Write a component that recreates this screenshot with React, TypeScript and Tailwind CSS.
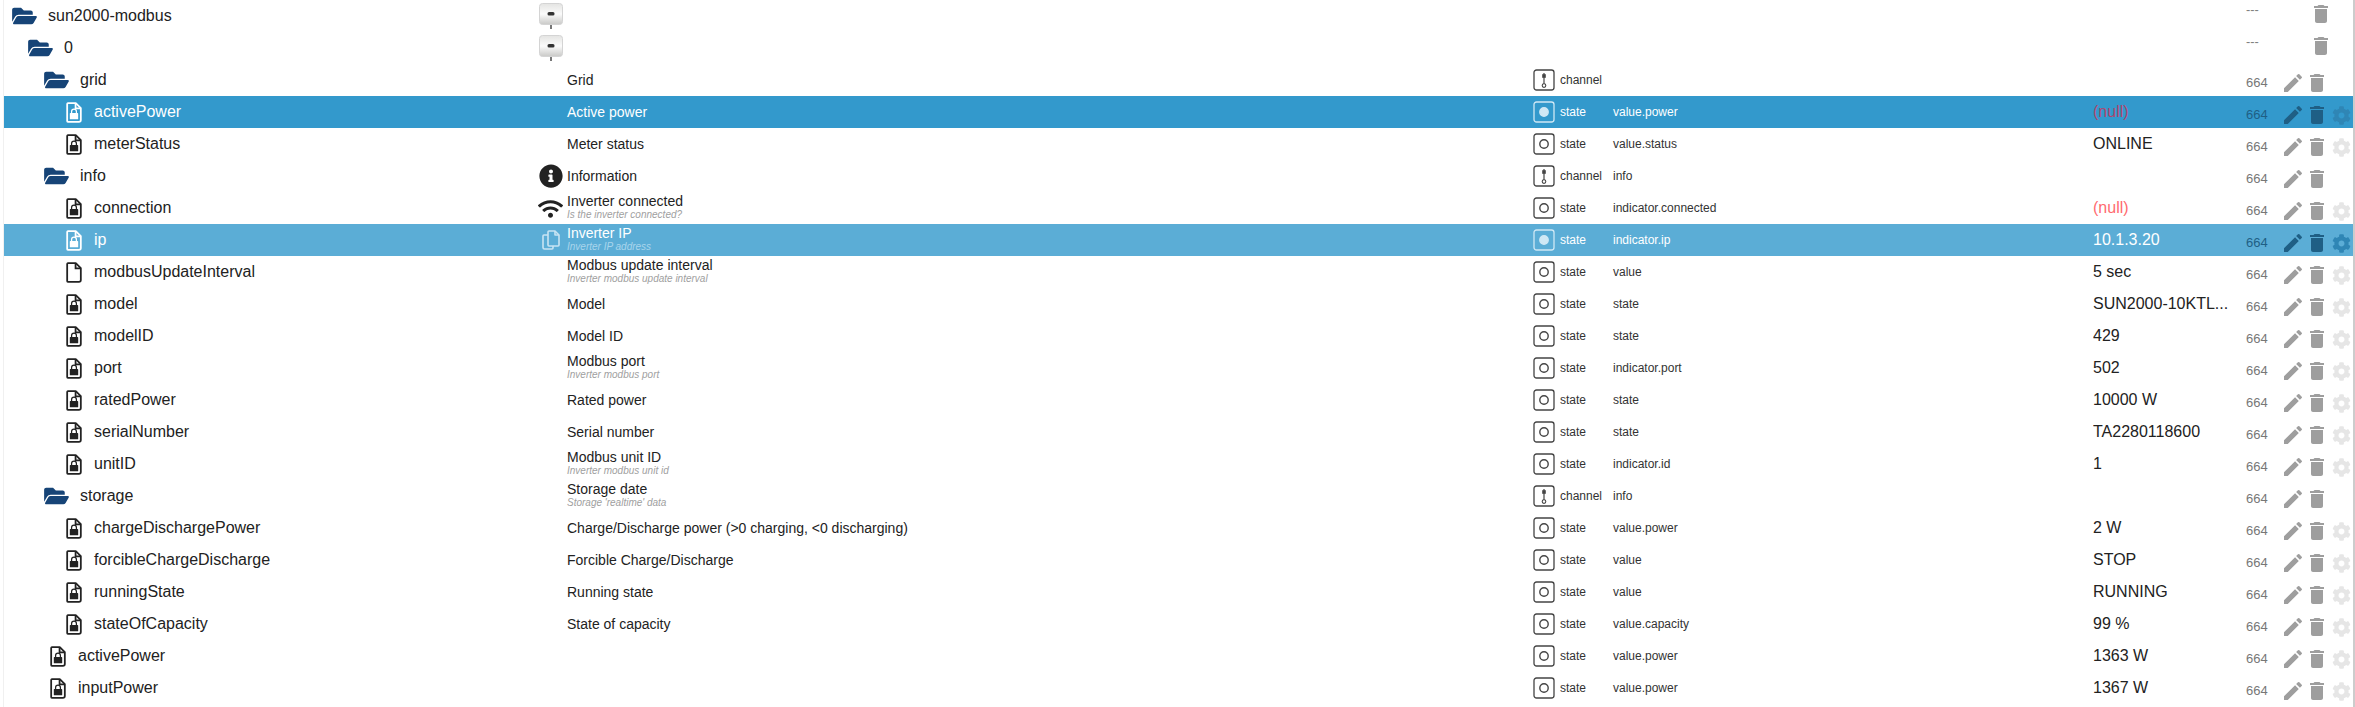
import React from 'react'
import { FaFolderOpen, FaInfoCircle, FaWifi, FaCog } from 'react-icons/fa'
import { MdEdit, MdDelete } from 'react-icons/md'

type Row = {
  name: string
  indent: string
  folder?: boolean
  unlocked?: boolean
  title?: string
  sub?: string
  icon?: 'adapter' | 'info' | 'wifi' | 'copy'
  type?: 'state' | 'channel'
  role?: string
  value?: string
  nullValue?: boolean
  selected?: 'main' | 'soft'
  acl?: string
}

const rows: Row[] = [
  { name: 'sun2000-modbus', indent: 'pl-[8px]', folder: true, icon: 'adapter', acl: '---' },
  { name: '0', indent: 'pl-[24px]', folder: true, icon: 'adapter', acl: '---' },
  { name: 'grid', indent: 'pl-[40px]', folder: true, title: 'Grid', type: 'channel' },
  { name: 'activePower', indent: 'pl-[62px]', title: 'Active power', type: 'state', role: 'value.power', value: '(null)', nullValue: true, selected: 'main' },
  { name: 'meterStatus', indent: 'pl-[62px]', title: 'Meter status', type: 'state', role: 'value.status', value: 'ONLINE' },
  { name: 'info', indent: 'pl-[40px]', folder: true, title: 'Information', icon: 'info', type: 'channel', role: 'info' },
  { name: 'connection', indent: 'pl-[62px]', title: 'Inverter connected', sub: 'Is the inverter connected?', icon: 'wifi', type: 'state', role: 'indicator.connected', value: '(null)', nullValue: true },
  { name: 'ip', indent: 'pl-[62px]', title: 'Inverter IP', sub: 'Inverter IP address', icon: 'copy', type: 'state', role: 'indicator.ip', value: '10.1.3.20', selected: 'soft' },
  { name: 'modbusUpdateInterval', indent: 'pl-[62px]', unlocked: true, title: 'Modbus update interval', sub: 'Inverter modbus update interval', type: 'state', role: 'value', value: '5 sec' },
  { name: 'model', indent: 'pl-[62px]', title: 'Model', type: 'state', role: 'state', value: 'SUN2000-10KTL...' },
  { name: 'modelID', indent: 'pl-[62px]', title: 'Model ID', type: 'state', role: 'state', value: '429' },
  { name: 'port', indent: 'pl-[62px]', title: 'Modbus port', sub: 'Inverter modbus port', type: 'state', role: 'indicator.port', value: '502' },
  { name: 'ratedPower', indent: 'pl-[62px]', title: 'Rated power', type: 'state', role: 'state', value: '10000 W' },
  { name: 'serialNumber', indent: 'pl-[62px]', title: 'Serial number', type: 'state', role: 'state', value: 'TA2280118600' },
  { name: 'unitID', indent: 'pl-[62px]', title: 'Modbus unit ID', sub: 'Inverter modbus unit id', type: 'state', role: 'indicator.id', value: '1' },
  { name: 'storage', indent: 'pl-[40px]', folder: true, title: 'Storage date', sub: "Storage 'realtime' data", type: 'channel', role: 'info' },
  { name: 'chargeDischargePower', indent: 'pl-[62px]', title: 'Charge/Discharge power (>0 charging, <0 discharging)', type: 'state', role: 'value.power', value: '2 W' },
  { name: 'forcibleChargeDischarge', indent: 'pl-[62px]', title: 'Forcible Charge/Discharge', type: 'state', role: 'value', value: 'STOP' },
  { name: 'runningState', indent: 'pl-[62px]', title: 'Running state', type: 'state', role: 'value', value: 'RUNNING' },
  { name: 'stateOfCapacity', indent: 'pl-[62px]', title: 'State of capacity', type: 'state', role: 'value.capacity', value: '99 %' },
  { name: 'activePower', indent: 'pl-[46px]', type: 'state', role: 'value.power', value: '1363 W' },
  { name: 'inputPower', indent: 'pl-[46px]', type: 'state', role: 'value.power', value: '1367 W' },
]

function FileIcon({ locked, className }: { locked: boolean; className: string }) {
  return (
    <svg viewBox="0 0 15 20" className={className} fill="none">
      <path d="M1.8 1h7.4L14 5.8V17.2a1.8 1.8 0 0 1-1.8 1.8H1.8A1 1 0 0 1 1 18V1.8A1 1 0 0 1 1.8 1z" stroke="currentColor" strokeWidth="1.7" strokeLinejoin="round" />
      <path d="M9 1v5h5" stroke="currentColor" strokeWidth="1.7" />
      {locked && <rect x="3.5" y="10.5" width="8" height="6" rx="0.6" fill="currentColor" />}
      {locked && <path d="M5.2 10.5V9a2.3 2.3 0 0 1 4.6 0v1.5" stroke="currentColor" strokeWidth="1.2" />}
    </svg>
  )
}

function CopyIcon() {
  return (
    <svg viewBox="0 0 18 20" className="w-[18px] h-[20px] text-[#c8e4f3]" fill="none" stroke="currentColor" strokeWidth="1.6" strokeLinejoin="round">
      <path d="M7 1h6l4 4v10a1 1 0 0 1-1 1H7a1 1 0 0 1-1-1V2a1 1 0 0 1 1-1z" />
      <path d="M13 1v4h4" />
      <path d="M6 5H2a1 1 0 0 0-1 1v11.5A1.5 1.5 0 0 0 2.5 19H10a1 1 0 0 0 1-1v-2" />
    </svg>
  )
}

function TypeIcon({ type, selected }: { type: 'state' | 'channel'; selected: boolean }) {
  return (
    <svg viewBox="0 0 22 22" className="w-[22px] h-[22px]" fill="none">
      <rect x="1" y="1" width="20" height="20" rx="2.5" stroke="currentColor" strokeWidth="1.3" />
      {type === 'state' ? (
        <circle cx="11" cy="11" r="4.2" stroke="currentColor" strokeWidth="1.4" fill={selected ? 'currentColor' : 'none'} />
      ) : (
        <>
          <path d="M11 4v12" stroke="currentColor" strokeWidth="1.2" />
          <rect x="9.2" y="5.2" width="3.6" height="3.6" fill="currentColor" />
          <circle cx="11" cy="16.6" r="1.8" stroke="currentColor" strokeWidth="1.1" fill="#fff" />
        </>
      )}
    </svg>
  )
}

function AdapterIcon() {
  return (
    <svg viewBox="0 0 24 26" className="w-6 h-[26px]">
      <defs>
        <linearGradient id="box" x1="0" y1="0" x2="0" y2="1">
          <stop offset="0" stopColor="#e4e4e2" />
          <stop offset="0.5" stopColor="#fbfbfb" />
          <stop offset="1" stopColor="#c9c9c7" />
        </linearGradient>
      </defs>
      <rect x="0.5" y="0.5" width="23" height="21" rx="3" fill="url(#box)" stroke="#d4d4d4" />
      <rect x="8.5" y="9" width="7" height="3.4" rx="1.5" fill="#333" />
      <rect x="11" y="22" width="2" height="4" fill="#777" />
    </svg>
  )
}

function TitleIcon({ icon }: { icon?: Row['icon'] }) {
  if (icon === 'adapter') return <AdapterIcon />
  if (icon === 'info') return <FaInfoCircle className="w-6 h-6 text-[#222]" />
  if (icon === 'wifi') return <FaWifi className="w-[25px] h-[20px] text-[#222] translate-y-[1px]" />
  if (icon === 'copy') return <CopyIcon />
  return null
}

function ObjectRow({ row }: { row: Row }) {
  const sel = !!row.selected
  const bg = row.selected === 'main' ? 'bg-[#3399cc]' : row.selected === 'soft' ? 'bg-[#5badd6]' : ''
  const text = sel ? 'text-white' : 'text-[#222]'
  const action = sel ? 'text-[#1f5f85]' : 'text-[#9e9e9e]'
  const gear = sel ? 'text-[#2f86b5]' : 'text-[#e6e6e6]'
  const nullColor = sel ? 'text-[#b0466e]' : 'text-[#ff6a6f]'
  return (
    <div className={`flex h-8 items-center ${bg} ${text}`}>
      {/* name */}
      <div className={`flex w-[530px] shrink-0 items-center ${row.indent}`}>
        {row.folder ? (
          <FaFolderOpen className="w-[25px] h-[22px] text-[#164477] mr-[11px]" />
        ) : (
          <FileIcon locked={!row.unlocked} className="w-[16px] h-[21px] mr-[12px]" />
        )}
        <span className="text-base">{row.name}</span>
      </div>
      {/* title */}
      <div className="flex w-[999px] shrink-0 items-center">
        <div className="flex w-[33px] shrink-0 justify-center">
          <TitleIcon icon={row.icon} />
        </div>
        {row.title && (
          <div className={`flex flex-col ${row.sub ? '-translate-y-[1px]' : ''}`}>
            <span className="text-sm leading-[15px] whitespace-nowrap">{row.title}</span>
            {row.sub && (
              <span className={`text-[10px] leading-[12px] italic ${sel ? 'text-[#a9d5ec]' : 'text-[#a0a0a0]'}`}>{row.sub}</span>
            )}
          </div>
        )}
      </div>
      {/* type + role */}
      <div className={`flex w-[560px] shrink-0 items-center text-xs ${sel ? 'text-white' : 'text-[#333]'}`}>
        <div className={`mr-[5px] ${sel ? 'text-[#cfe8f5]' : 'text-[#444]'}`}>
          {row.type && <TypeIcon type={row.type} selected={sel} />}
        </div>
        <span className="w-[53px]">{row.type}</span>
        <span>{row.role}</span>
      </div>
      {/* value */}
      <div className={`w-[153px] shrink-0 truncate text-base ${row.nullValue ? nullColor : ''}`}>{row.value}</div>
      {/* acl and actions */}
      {row.acl ? (
        <div className="flex items-center -translate-y-[1px]">
          <span className="w-[63px] text-[12.8px] -translate-y-[5px] text-[#808080]">{row.acl}</span>
          <MdDelete className="w-[24px] h-[24px] text-[#9e9e9e] -translate-y-[1px]" />
        </div>
      ) : (
        <div className="flex items-center">
          <span className={`w-[35px] text-[13px] translate-y-[3px] ${sel ? 'text-[#1f5f85]' : 'text-[#777]'}`}>664</span>
          <MdEdit className={`w-[24px] h-[24px] ${action} translate-y-[3px]`} />
          <MdDelete className={`w-[24px] h-[24px] ${action} translate-y-[3px]`} />
          {row.type === 'state' && <FaCog className={`w-[19px] h-[19px] ${gear} ml-[3px] translate-y-[3px]`} />}
        </div>
      )}
    </div>
  )
}

export default function App() {
  return (
    <div className="flex w-[2355px] h-[707px] overflow-hidden bg-white font-['Liberation_Sans',Arial,sans-serif] pl-[3px]">
      <div className="flex-1 min-w-0 border-l border-[#f0f0f0]">
        {rows.map((row, i) => (
          <ObjectRow key={i} row={row} />
        ))}
      </div>
      <div className="w-[2px] shrink-0 bg-[#cccccc]" />
    </div>
  )
}
